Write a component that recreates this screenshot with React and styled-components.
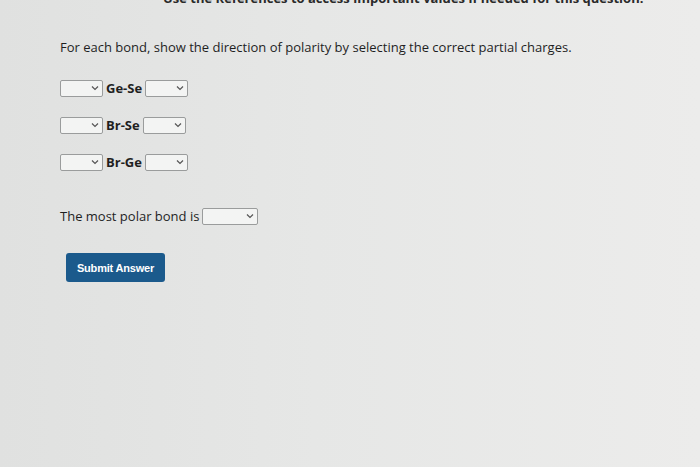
import styled, { createGlobalStyle } from "styled-components";

const Global = createGlobalStyle`
  html, body {
    margin: 0;
    padding: 0;
  }
  body {
    width: 700px;
    height: 467px;
    overflow: hidden;
    font-family: "Open Sans", "Liberation Sans", sans-serif;
    background: linear-gradient(90deg, #e0e1e0 0%, #e6e7e6 45%, #ececeb 100%);
    color: #222;
  }
`;

const Page = styled.div`
  height: 467px;
  padding: 0 0 0 60px;
`;

const TopNote = styled.div`
  margin: -11px 0 0 103px;
  font-size: 13px;
  font-weight: 700;
  color: #2a2a2a;
  white-space: nowrap;
  height: 16px;
`;

const Prompt = styled.p`
  margin: 33px 0 0 0;
  font-size: 13px;
  color: #1f1f1f;
`;

const Bonds = styled.div`
  display: flex;
  flex-direction: column;
  gap: 19px;
  margin-top: 23px;
`;

const BondRow = styled.div`
  display: flex;
  align-items: center;
  gap: 3px;
  height: 18px;
`;

const SelectBox = styled.div`
  width: ${(p) => p.$w || 43}px;
  height: 17px;
  box-sizing: border-box;
  border: 1px solid #9a9c9c;
  border-radius: 2px;
  background: #f3f4f3;
  display: flex;
  align-items: center;
  justify-content: flex-end;
  padding-right: 3px;
`;

const Label = styled.span`
  font-size: 13px;
  font-weight: 700;
  color: #1f1f1f;
`;

const Polar = styled.div`
  display: flex;
  align-items: center;
  gap: 3px;
  margin-top: 36px;
  font-size: 13px;
  color: #1f1f1f;
`;

const Submit = styled.button`
  margin: 28px 0 0 6px;
  width: 99px;
  height: 29px;
  border: none;
  border-radius: 3px;
  background: #1b5a8c;
  color: #fff;
  font-family: "Liberation Sans", Arial, sans-serif;
  font-weight: 700;
  font-size: 11px;
  letter-spacing: -0.2px;
`;

const Chevron = () => (
  <svg width="8" height="6" viewBox="0 0 8 6">
    <path d="M1 1.5 L4 4.5 L7 1.5" fill="none" stroke="#555" strokeWidth="1.2" />
  </svg>
);

const Select = ({ w }) => (
  <SelectBox $w={w}>
    <Chevron />
  </SelectBox>
);

const bonds = ["Ge-Se", "Br-Se", "Br-Ge"];

export default function App() {
  return (
    <Page>
      <Global />
      <TopNote>Use the References to access important values if needed for this question.</TopNote>
      <Prompt>For each bond, show the direction of polarity by selecting the correct partial charges.</Prompt>
      <Bonds>
        {bonds.map((b) => (
          <BondRow key={b}>
            <Select w={43} />
            <Label>{b}</Label>
            <Select w={43} />
          </BondRow>
        ))}
      </Bonds>
      <Polar>
        <span>The most polar bond is</span>
        <Select w={56} />
      </Polar>
      <Submit>Submit Answer</Submit>
    </Page>
  );
}
